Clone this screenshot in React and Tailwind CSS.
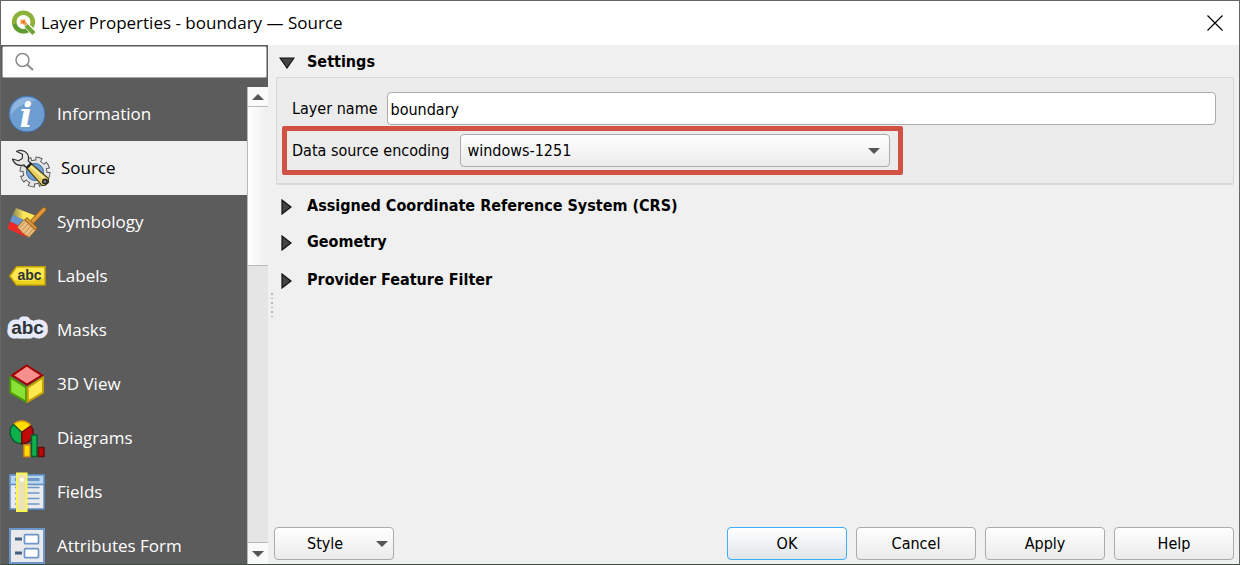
import React, { useState } from 'react';

const QgisLogo = () => (
  <svg width="26" height="26" viewBox="0 0 26 26" aria-hidden="true">
    <circle cx="12.5" cy="12" r="9.3" fill="none" stroke="#8bb33a" strokeWidth="4.6" />
    <path d="M3.5 14a9.3 9.3 0 0 0 13 6.4" fill="none" stroke="#5f9a34" strokeWidth="4" />
    <path d="M15 15l9 9" stroke="#fff" strokeWidth="6" />
    <path d="M15 15.5l8 8" stroke="#6fa436" strokeWidth="4.2" />
    <path d="M9.5 9.5h5.5l-1 1.5 2.5 2.5-2.5 2.5-2.5-2.5-2 1z" fill="#f0a558" />
    <circle cx="12.5" cy="12" r="1.5" fill="#e8731a" />
  </svg>
);

const InformationIcon = () => (
  <svg width="40" height="40" viewBox="0 0 40 40" aria-hidden="true">
    <circle cx="20" cy="20" r="18" fill="#6d9dd1" stroke="#3f6aa8" strokeWidth="1" />
    <path d="M4 21A16 16 0 0 1 29 6.5C18 7.5 9 13 4 21z" fill="#8fb5de" />
    <text x="19" y="33" textAnchor="middle" fontFamily="DejaVu Serif, serif" fontStyle="italic" fontWeight="bold" fontSize="34" fill="#fff">
      i
    </text>
  </svg>
);

const SourceIcon = () => (
  <svg width="40" height="40" viewBox="0 0 40 40" aria-hidden="true">
    <circle cx="24" cy="24" r="12.5" fill="none" stroke="#555" strokeWidth="6" strokeDasharray="6.2 3.62" />
    <circle cx="24" cy="24" r="12" fill="#e4e4e4" stroke="#555" strokeWidth="1" />
    <circle cx="24" cy="24" r="12.5" fill="none" stroke="#e4e4e4" strokeWidth="4.2" strokeDasharray="4.4 5.42" strokeDashoffset="-0.9" />
    <circle cx="24" cy="24" r="8.5" fill="#6d9dd1" stroke="#3f6aa8" strokeWidth="1" />
    <path
      d="M5.5 3.500C9 1.500 14 2.500 16.500 6c1.500 2.500 1.500 5 .8 7l4.200 4-4.500 4.500-4-4.700C8.500 18.500 3 16.500 1.500 11l6 1.800 3.800-2.300.2-4.200z"
      fill="#e9e9e6"
      stroke="#333"
      strokeWidth="1.2"
      strokeLinejoin="round"
    />
    <path d="M20 15.5L37.500 30.500v4l-3.500 3h-3L15.500 20z" fill="#e8cf62" stroke="#4a421c" strokeWidth="1.2" />
    <path d="M20 18.5l15 13.500" stroke="#f8e998" strokeWidth="2" />
    <path d="M20.5 15l-5 5.200" stroke="#222" strokeWidth="2.5" />
    <circle cx="34" cy="33.5" r="2.3" fill="#777" stroke="#222" strokeWidth="1.5" />
  </svg>
);

const SymbologyIcon = () => (
  <svg width="40" height="40" viewBox="0 0 40 40" aria-hidden="true">
    <defs>
      <linearGradient id="yellowFade">
        <stop offset="0" stopColor="#8a8458" />
        <stop offset=".5" stopColor="#fbe657" />
      </linearGradient>
    </defs>
    <path d="M9 6l19 7.500-4 8L5.500 13z" fill="url(#yellowFade)" />
    <path d="M5.500 13L24 21l-3 7L3 19.500z" fill="#6795cc" />
    <path d="M3 19.500L21 28l-2.500 7L.5 26.500z" fill="#ef2929" />
    <path d="M37 7.500L26 19" stroke="#8f5c15" strokeWidth="5" strokeLinecap="round" />
    <path d="M37 7.500L25 20" stroke="#e0963a" strokeWidth="3.3" strokeLinecap="round" />
    <path d="M20 15.500l10 10-1 3-11-10.500z" fill="#d9963e" stroke="#8f5c15" strokeWidth="1" />
    <path d="M17 17.500L28.500 28.500 22 35.500Q14 31 10.500 25z" fill="#e9bd83" stroke="#a86c24" strokeWidth="1" />
    <path d="M18.500 19.500l-6 6.500M21 22l-6 6.500M23.500 24.500l-6 6.500M26 27l-5.500 6.500" stroke="#c28b47" strokeWidth="1" />
  </svg>
);

const LabelsIcon = () => (
  <svg width="40" height="40" viewBox="0 0 40 40" aria-hidden="true">
    <path d="M9.5 10.700h28.500v18.300H9.500L2.800 20z" fill="#fce94f" stroke="#c4a000" strokeWidth="1.5" />
    <path d="M37 22v6H10l-3-4c12 2 22 1 30-2z" fill="#edd21c" />
    <text x="22.5" y="24" textAnchor="middle" fontFamily="Liberation Sans, sans-serif" fontWeight="bold" fontSize="14" fill="#2e3436">
      abc
    </text>
  </svg>
);

const MasksIcon = () => (
  <svg width="42" height="40" viewBox="0 0 42 40" aria-hidden="true">
    <text
      x="20.5"
      y="24"
      textAnchor="middle"
      fontFamily="Liberation Sans, sans-serif"
      fontWeight="bold"
      fontSize="19"
      fill="#2e3436"
      stroke="#e6eafc"
      strokeWidth="9"
      strokeLinejoin="round"
      paintOrder="stroke"
    >
      abc
    </text>
  </svg>
);

const View3dIcon = () => (
  <svg width="40" height="40" viewBox="0 0 40 40" strokeWidth="2" aria-hidden="true">
    <path d="M3.300 13.500l15.800 10v14L3.300 28.700z" fill="#8ae234" stroke="#4e9a06" />
    <path d="M36 13.500l-15.200 10v14L36 28.700z" fill="#fce94f" stroke="#c4a000" />
    <path d="M19.700 1.500l15.300 9.800L20 20.500 5.300 11.300z" fill="#f78f8f" stroke="#a40000" />
  </svg>
);

const DiagramsIcon = () => (
  <svg width="40" height="40" viewBox="0 0 40 40" strokeWidth="1.4" aria-hidden="true">
    <path d="M14.700 14.300L6.500 6.400a11.300 11.300 0 0 1 17.400 1.500z" fill="#ffdd00" stroke="#d99a12" />
    <path d="M14.700 14.300v11.400A11.300 11.300 0 0 1 6.500 6.400z" fill="#0cb14c" stroke="#0b5a34" />
    <path d="M14.700 14.300v11.400A11.300 11.300 0 0 0 23.900 7.900z" fill="#c00a0a" stroke="#650b0b" />
    <path d="M17 27h6v11.500h-6z" fill="#ffdd00" stroke="#e08a12" />
    <path d="M24.500 17h5.500v21.500h-5.500z" fill="#0cb14c" stroke="#0b5a34" />
    <path d="M31.500 29.500H37v9h-5.500z" fill="#c00a0a" stroke="#650b0b" />
  </svg>
);

const FieldsIcon = () => (
  <svg width="40" height="40" viewBox="0 0 40 40" aria-hidden="true">
    <path d="M3 3h34v34H3z" fill="#eaeaec" stroke="#5f8dc5" strokeWidth="1.5" />
    <path d="M3 3h34v9.500H3z" fill="#b9d5ee" stroke="#5f8dc5" strokeWidth="1.5" />
    <path d="M8 7.500h24.500" stroke="#6d97ca" strokeWidth="3" />
    <path d="M8 15.500h24.500M8 21h24.500M8 26.500h24.500M8 32h24.500" stroke="#6d97ca" strokeWidth="1.5" />
    <path d="M10 1.500h9.500v37.500H10z" fill="#ebe3b5" stroke="#fcf750" strokeWidth="2" />
    <path d="M13 6h3.500v3.500H13z" fill="#fff" />
  </svg>
);

const AttributesFormIcon = () => (
  <svg width="40" height="40" viewBox="0 0 40 40" aria-hidden="true">
    <path d="M3 3h34v34H3z" fill="#eaeaec" stroke="#6d97ca" strokeWidth="2" />
    <path d="M8 13h7M8 27h7" stroke="#416080" strokeWidth="3.2" />
    <rect x="17.5" y="8.700" width="14" height="9" rx="1" fill="#fff" stroke="#6d97ca" strokeWidth="1.7" />
    <rect x="17.5" y="22.700" width="14" height="9" rx="1" fill="#fff" stroke="#6d97ca" strokeWidth="1.7" />
  </svg>
);

const pages = [
  { name: 'Information', Icon: InformationIcon },
  { name: 'Source', Icon: SourceIcon },
  { name: 'Symbology', Icon: SymbologyIcon },
  { name: 'Labels', Icon: LabelsIcon },
  { name: 'Masks', Icon: MasksIcon },
  { name: '3D View', Icon: View3dIcon },
  { name: 'Diagrams', Icon: DiagramsIcon },
  { name: 'Fields', Icon: FieldsIcon },
  { name: 'Attributes Form', Icon: AttributesFormIcon },
];

const SmallArrow = ({ up }) => (
  <svg width="12" height="6" viewBox="0 0 12 6" className="shrink-0" aria-hidden="true">
    <path d={up ? 'M0 6L6 0l6 6z' : 'M0 0h12L6 6z'} fill="#555" />
  </svg>
);

const Sidebar = ({ page, setPage }) => (
  <aside className="flex w-[267px] shrink-0 flex-col bg-[#5c5c5c]">
    <label className="mx-px mt-px flex h-8 shrink-0 items-center rounded-xs border border-[#a8a8a8] bg-white pl-3">
      <svg width="20" height="20" viewBox="0 0 20 20" fill="none" stroke="#8c8c8c" strokeWidth="1.5" aria-hidden="true">
        <circle cx="7.5" cy="8" r="6.5" />
        <path d="M12 12.500l6 5.500" strokeWidth="2" />
      </svg>
      <input type="text" aria-label="Search" className="min-w-0 flex-1 px-2 outline-none" />
    </label>

    <div className="mt-[9px] flex min-h-0 flex-1">
      <nav className="min-w-0 flex-1 overflow-hidden">
        {pages.map(({ name, Icon }) => (
          <button
            key={name}
            onClick={() => setPage(name)}
            className={`flex h-[54px] w-full items-center text-left text-[17px] ${
              page === name ? 'bg-[#f0f0f0] pl-2.5 text-black' : 'pl-1.5 text-white'
            }`}
          >
            <span className="mr-2.5 w-10 shrink-0">
              <Icon />
            </span>
            {name}
          </button>
        ))}
      </nav>

      {/* Scrollbar */}
      <div className="flex w-[21px] flex-col border-l border-[#b8b8b8] bg-[#e5e5e5]">
        <button aria-label="Scroll up" className="flex h-5 items-center justify-center border-b border-[#b8b8b8] bg-[#fafafa]">
          <SmallArrow up />
        </button>
        <div className="h-[159px] border-b border-[#b8b8b8] bg-gradient-to-r from-white to-[#efefef]" />
        <div className="flex-1" />
        <button aria-label="Scroll down" className="flex h-[22px] items-center justify-center border-t border-[#b8b8b8] bg-[#fafafa]">
          <SmallArrow />
        </button>
      </div>
    </div>
  </aside>
);

const SectionHeader = ({ title, open, onClick }) => (
  <button onClick={onClick} aria-expanded={open} className="flex h-8 items-center gap-3 pt-0.5 pl-[3px] text-base font-bold">
    <svg width="16" height="16" viewBox="0 0 16 16" className="mt-0.5" aria-hidden="true">
      <path d={open ? 'M1 3h14L8 13z' : 'M3 1v14l9-7z'} fill="#444" stroke="#111" strokeWidth="1.2" />
    </svg>
    {title}
  </button>
);

const DialogButton = ({ children, primary }) => (
  <button
    className={`h-[33px] w-[120px] rounded-sm border bg-gradient-to-b from-white ${
      primary ? 'border-[#3daeff] to-[#e1e6ea]' : 'border-[#ababab] to-[#ebebeb]'
    }`}
  >
    {children}
  </button>
);

const App = () => {
  const [page, setPage] = useState('Source');
  const [settingsOpen, setSettingsOpen] = useState(true);

  return (
    <div className="flex h-screen flex-col border border-[#666] border-b-[#3f4a40] bg-[#f0f0f0] font-['Open_Sans',sans-serif] text-black">
      <header className="flex h-11 shrink-0 items-center bg-white pr-4 pl-2.5">
        <QgisLogo />
        <h1 className="ml-1 flex-1 text-[17px]">Layer Properties - boundary — Source</h1>
        <button aria-label="Close">
          <svg width="16" height="16" viewBox="0 0 16 16" stroke="#000" strokeWidth="1.2" aria-hidden="true">
            <path d="M.5.5l15 15M15.500.500l-15 15" />
          </svg>
        </button>
      </header>

      <div className="flex min-h-0 flex-1">
        <Sidebar page={page} setPage={setPage} />

        {/* Splitter handle */}
        <div className="flex w-1.5 shrink-0 items-center justify-end">
          <svg width="3" height="24" viewBox="0 0 3 24" fill="#b4b4b4" aria-hidden="true">
            <path d="M0 0h2v2H0zM0 5h2v1H0zM0 9h2v2H0zM0 14h2v1H0zM0 18h2v2H0zM0 23h2v1H0z" />
          </svg>
        </div>

        <main className="flex min-w-0 flex-1 flex-col pr-[5px] font-['DejaVu_Sans_Condensed','DejaVu_Sans',sans-serif] text-base">
          <div className="flex flex-1 flex-col items-start pl-0.5">
            <SectionHeader title="Settings" open={settingsOpen} onClick={() => setSettingsOpen(!settingsOpen)} />

            {settingsOpen && (
              <div className="mb-1 w-full rounded-xs border border-b-2 border-[#d8d8d8] bg-[#ececec] pt-3.5 pr-[17px] pb-2 pl-[5px]">
                <div className="flex items-center gap-[9px] pl-2.5">
                  <label htmlFor="layer-name">Layer name</label>
                  <input
                    id="layer-name"
                    type="text"
                    defaultValue="boundary"
                    className="h-[33px] min-w-0 flex-1 rounded-sm border border-[#ababab] bg-white px-[3px] pt-0.5 outline-none"
                  />
                </div>
                <div className="mt-px flex w-fit items-center gap-[11px] rounded-xs border-[5px] border-[#d15145] py-[3px] pr-2 pl-[5px]">
                  <label htmlFor="encoding">Data source encoding</label>
                  <div className="relative">
                    <select
                      id="encoding"
                      defaultValue="windows-1251"
                      className="h-[33px] w-[430px] appearance-none rounded-sm border border-[#ababab] bg-gradient-to-b from-white to-[#ebebeb] px-1.5 outline-none"
                    >
                      <option>windows-1251</option>
                      <option>UTF-8</option>
                    </select>
                    <span className="pointer-events-none absolute inset-y-0 right-2.5 flex items-center">
                      <SmallArrow />
                    </span>
                  </div>
                </div>
              </div>
            )}

            <SectionHeader title="Assigned Coordinate Reference System (CRS)" open={false} />
            <div className="pt-1">
              <SectionHeader title="Geometry" open={false} />
            </div>
            <div className="pt-1.5">
              <SectionHeader title="Provider Feature Filter" open={false} />
            </div>
          </div>

          <footer className="flex items-center gap-[9px] pb-1">
            <button className="mr-auto flex h-[33px] w-[120px] items-center rounded-sm border border-[#ababab] bg-gradient-to-b from-white to-[#ebebeb] pr-[5px] pl-8">
              <span className="flex-1 text-left">Style</span>
              <SmallArrow />
            </button>
            <DialogButton primary>OK</DialogButton>
            <DialogButton>Cancel</DialogButton>
            <DialogButton>Apply</DialogButton>
            <DialogButton>Help</DialogButton>
          </footer>
        </main>
      </div>
    </div>
  );
};

export default App;
